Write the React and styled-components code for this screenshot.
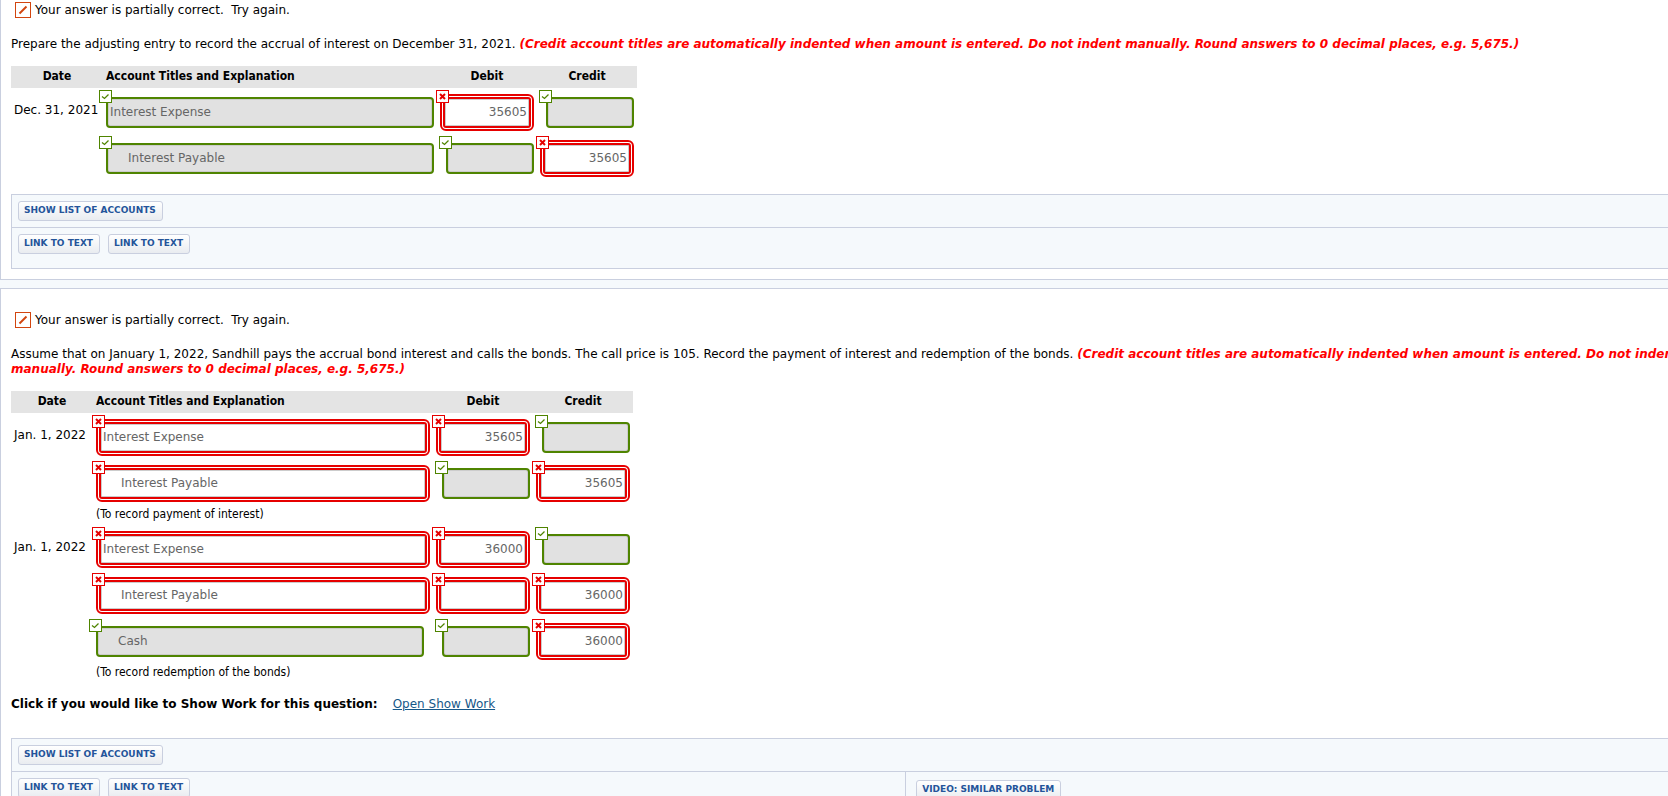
import React, { useId } from "react";
import styled, { createGlobalStyle, css } from "styled-components";

const GlobalStyle = createGlobalStyle`
  *, *::before, *::after { box-sizing: border-box; }
  html { overflow-x: hidden; }
  body {
    margin: 0;
    background: #f5f9fc;
    color: #000;
    font: 12px/15px Verdana, "DejaVu Sans", sans-serif;
  }
`;

const narrow = '"DejaVu Sans Condensed", "DejaVu Sans", sans-serif';
const line = "#c9cfdf";

const Page = styled.main`
  display: flex;
  flex-direction: column;
  gap: 8px;
  width: 104vw;
`;

const Question = styled.section`
  padding: ${(p) => (p.$first ? "2px" : "23px")} 4px 10px 10px;
  border: solid ${line};
  border-width: ${(p) => (p.$first ? "0 0 1px 1px" : "1px 0 1px 1px")};
  background: #fff;
`;

const Feedback = styled.p`
  display: flex;
  align-items: center;
  gap: 4px;
  height: 16px;
  margin: 0 0 19px;
  padding-left: 4px;
  line-height: 16px;
  white-space: pre;
`;

const Prompt = styled.p`
  margin: 0 0 14px;
`;

const Hint = styled.em`
  color: #f00;
  font-weight: bold;
`;

const Journal = styled.table`
  border-collapse: collapse;
  table-layout: fixed;
  width: ${(p) => p.$dateWidth + p.$titleWidth + 200}px;
  margin-bottom: 14px;

  th {
    height: 22px;
    padding: 0 3px 2px;
    background: #e4e4e4;
    font: bold 12px/15px ${narrow};
  }
  th:nth-child(2) { text-align: left; }
  th:nth-child(1) { width: ${(p) => p.$dateWidth}px; }
  th:nth-child(2) { width: ${(p) => p.$titleWidth}px; }
  td { padding: 6px 3px 3px; vertical-align: top; }
`;

const DateCell = styled.td`
  line-height: 32px;
  white-space: nowrap;
`;

const NoteCell = styled.td`
  && { padding: 2px 3px 3px; }
  font: 12px/15px ${narrow};
`;

const FieldBox = styled.div`
  position: relative;
  width: ${(p) => (p.$title ? (p.$ok ? "328px" : "334px") : p.$ok ? "88px" : "94px")};
  margin: ${(p) => (p.$ok ? "3px 0" : "0")};
  margin-left: ${(p) => (p.$ok && !p.$title ? "6px" : "0")};
`;

const Input = styled.input`
  display: block;
  width: 100%;
  height: ${(p) => (p.$ok ? "31px" : "37px")};
  padding: 0 2px 2px ${(p) => (p.$indent ? "20px" : "2px")};
  border: ${(p) => (p.$ok ? "2px solid #4f8400" : "5px double #e60000")};
  border-radius: ${(p) => (p.$ok ? "4px" : "6px")};
  outline: 0;
  background: ${(p) => (p.$ok ? "#e1e1e1" : "#fff")};
  box-shadow: inset 0 0 0 1px #ccc;
  color: #666;
  font: inherit;
  text-align: ${(p) => (p.$title ? "left" : "right")};
`;

const Badge = styled.svg`
  position: absolute;
  top: ${(p) => (p.$ok ? "-7px" : "-4px")};
  left: ${(p) => (p.$ok ? "-7px" : "-4px")};
  width: 13px;
  height: 13px;
  border: 1px solid ${(p) => (p.$ok ? "#4f8400" : "#e60000")};
  background: #fff;
`;

const Tools = styled.div`
  display: grid;
  grid-template-columns: ${(p) => (p.$split ? "52fr 48fr" : "1fr")};
  border: 1px solid ${line};
  background: #f5f9fc;
`;

const ToolCell = styled.div`
  display: flex;
  align-items: flex-start;
  gap: 8px;
  padding: 6px;
  min-height: ${(p) => (p.$tall ? "40px" : "32px")};
  ${(p) => p.$wide && css`grid-column: 1 / -1; border-bottom: 1px solid ${line}; min-height: 33px;`}
  ${(p) => p.$side && css`border-left: 1px solid ${line}; padding: 8px 10px;`}
`;

const Button = styled.button`
  height: 20px;
  padding: 0 6px 1px 5px;
  border: 1px solid ${line};
  border-radius: 3px;
  background: linear-gradient(#fff, #e9ecf0);
  color: #24549a;
  font: bold 9px/15px Verdana, "DejaVu Sans", sans-serif;
  white-space: nowrap;
  text-transform: uppercase;
`;

const ShowWork = styled.p`
  display: flex;
  gap: 15px;
  margin: 0 0 26px;
  font-weight: bold;
`;

const WorkLink = styled.a`
  color: #165788;
  font-weight: normal;
`;

function Status() {
  return (
    <Feedback>
      <svg width="16" height="16" viewBox="0 0 16 16" aria-hidden="true">
        <rect x=".5" y=".5" width="15" height="15" fill="#fff" stroke="#d2450f" />
        <path d="M4.5 11.5 11.5 4.5" stroke="#d2450f" strokeWidth="2" />
      </svg>
      {"Your answer is partially correct.  Try again."}
    </Feedback>
  );
}

function Field({ label, value = "", ok, title, indent }) {
  const id = useId();
  return (
    <FieldBox $ok={ok} $title={title}>
      <Input id={id} aria-label={label} defaultValue={value} readOnly={ok} $ok={ok} $title={title} $indent={indent} />
      <Badge $ok={ok} viewBox="0 0 11 11" aria-hidden="true">
        {ok ? (
          <path d="M2 5.5 4.5 7.5 8.5 3.5" fill="none" stroke="#4f8400" strokeWidth="1.3" />
        ) : (
          <path d="M3 3 8 8M8 3 3 8" stroke="#e60000" strokeWidth="2" />
        )}
      </Badge>
    </FieldBox>
  );
}

const Entry = ({ date, title, titleOk, indent, debit, debitOk, credit, creditOk }) => (
  <tr>
    <DateCell>{date}</DateCell>
    <td><Field title label="Account title" value={title} ok={titleOk} indent={indent} /></td>
    <td><Field label="Debit" value={debit} ok={debitOk} /></td>
    <td><Field label="Credit" value={credit} ok={creditOk} /></td>
  </tr>
);

const Note = ({ children }) => (
  <tr>
    <td />
    <NoteCell colSpan={3}>{children}</NoteCell>
  </tr>
);

const JournalTable = ({ dateWidth, titleWidth, children }) => (
  <Journal $dateWidth={dateWidth} $titleWidth={titleWidth}>
    <thead>
      <tr>
        <th>Date</th>
        <th>Account Titles and Explanation</th>
        <th>Debit</th>
        <th>Credit</th>
      </tr>
    </thead>
    <tbody>{children}</tbody>
  </Journal>
);

export default function App() {
  return (
    <>
      <GlobalStyle />
      <Page>
        <Question $first>
          <Status />
          <Prompt>
            Prepare the adjusting entry to record the accrual of interest on December 31, 2021.{" "}
            <Hint>
              (Credit account titles are automatically indented when amount is entered. Do not indent manually. Round
              answers to 0 decimal places, e.g. 5,675.)
            </Hint>
          </Prompt>
          <JournalTable dateWidth={92} titleWidth={334}>
            <Entry date="Dec. 31, 2021" title="Interest Expense" titleOk debit="35605" creditOk />
            <Entry title="Interest Payable" titleOk indent debitOk credit="35605" />
          </JournalTable>
          <Tools>
            <ToolCell $wide><Button>Show list of accounts</Button></ToolCell>
            <ToolCell $tall>
              <Button>Link to text</Button>
              <Button>Link to text</Button>
            </ToolCell>
          </Tools>
        </Question>

        <Question>
          <Status />
          <Prompt>
            Assume that on January 1, 2022, Sandhill pays the accrual bond interest and calls the bonds. The call price
            is 105. Record the payment of interest and redemption of the bonds.{" "}
            <Hint>
              (Credit account titles are automatically indented when amount is entered. Do not indent manually. Round
              answers to 0 decimal places, e.g. 5,675.)
            </Hint>
          </Prompt>
          <JournalTable dateWidth={82} titleWidth={340}>
            <Entry date="Jan. 1, 2022" title="Interest Expense" debit="35605" creditOk />
            <Entry title="Interest Payable" indent debitOk credit="35605" />
            <Note>(To record payment of interest)</Note>
            <Entry date="Jan. 1, 2022" title="Interest Expense" debit="36000" creditOk />
            <Entry title="Interest Payable" indent credit="36000" />
            <Entry title="Cash" titleOk indent debitOk credit="36000" />
            <Note>(To record redemption of the bonds)</Note>
          </JournalTable>
          <ShowWork>
            Click if you would like to Show Work for this question:
            <WorkLink href="#show-work">Open Show Work</WorkLink>
          </ShowWork>
          <Tools $split>
            <ToolCell $wide><Button>Show list of accounts</Button></ToolCell>
            <ToolCell $tall>
              <Button>Link to text</Button>
              <Button>Link to text</Button>
            </ToolCell>
            <ToolCell $side><Button>Video: similar problem</Button></ToolCell>
          </Tools>
        </Question>
      </Page>
    </>
  );
}
